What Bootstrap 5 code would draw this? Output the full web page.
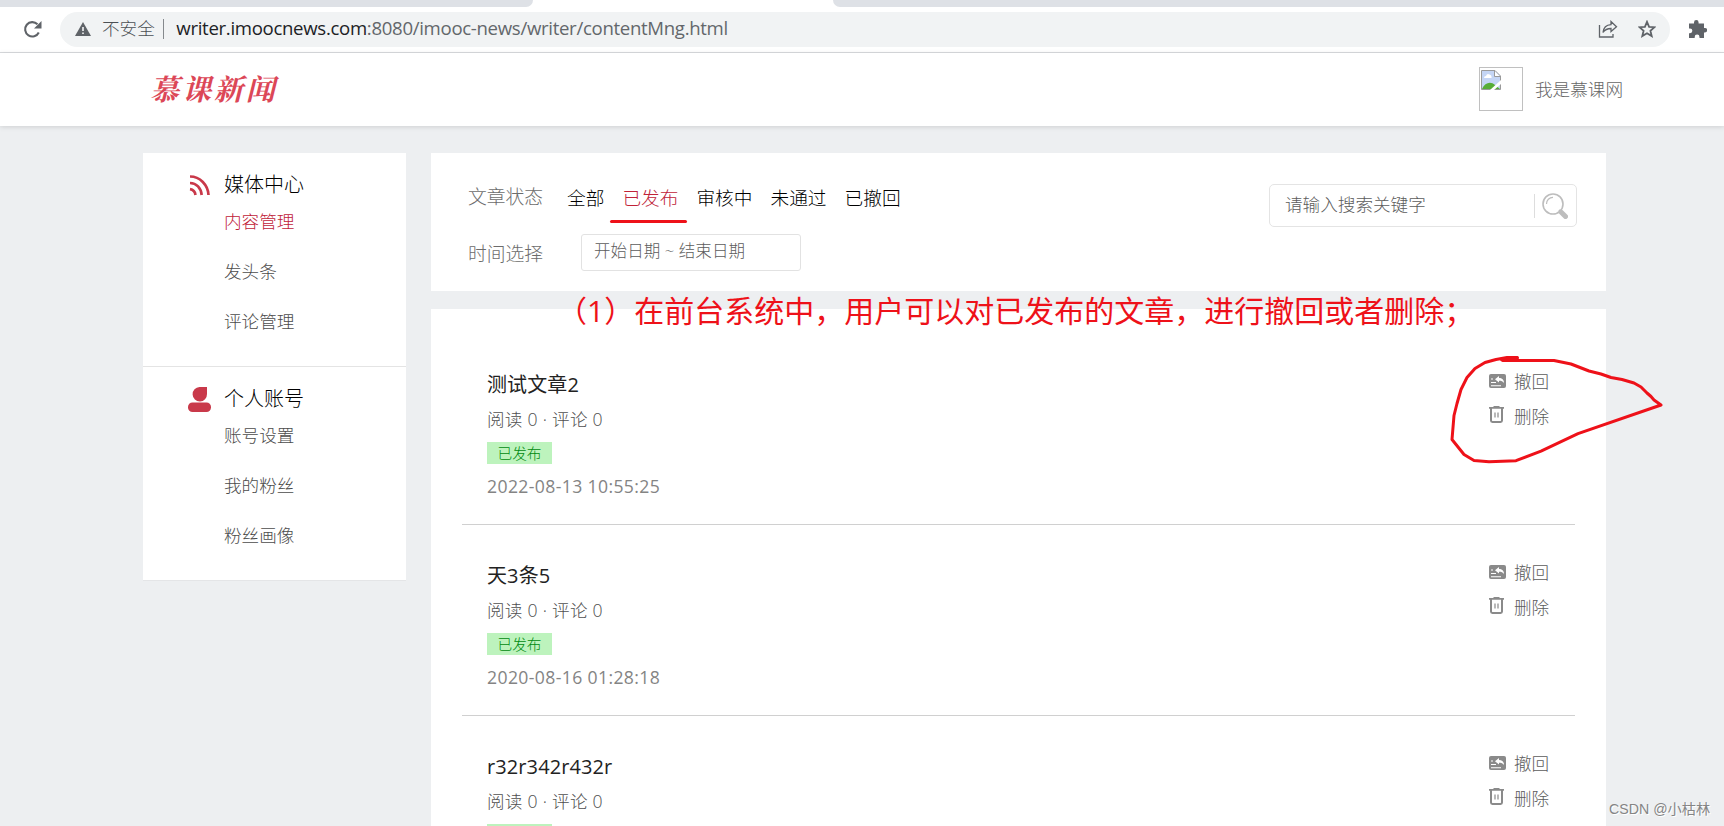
<!DOCTYPE html>
<html lang="zh-CN">
<head>
<meta charset="utf-8">
<title>内容管理</title>
<link rel="stylesheet" href="https://cdn.jsdelivr.net/npm/bootstrap@5.3.0/dist/css/bootstrap.min.css">
<style>
:root{--brand:#c9394a}
body{width:1724px;height:826px;overflow:hidden;position:relative;background:#edeff1;color:#222;font-family:"Open Sans","Noto Sans CJK SC",sans-serif;font-size:17.6px;line-height:26px;font-weight:300}
svg{display:block;flex:none}
.tabstrip{height:7px;background:#fff;display:flex;justify-content:space-between}
.tab-l{width:533px;background:#dee1e6;border-bottom-right-radius:7px}
.tab-r{width:891px;background:#dee1e6;border-bottom-left-radius:7px}
.toolbar{height:46px;background:#fff;border-bottom:1px solid #d9dbde;padding:4px 17px 5px 23px}
.omnibox{width:1610px;height:35px;margin-left:18px;border-radius:18px;background:#f1f3f4;padding:0 20px 0 15px;color:#4c5054}
.omnibox .divide{width:1.5px;height:20px;background:#85898d;margin:0 12px 0 8px}
.omnibox>span{margin-top:-2px}
.url{font-size:18.6px;letter-spacing:-.31px;color:#63676b;font-weight:400}
.url b{font-weight:400;color:#202124}
.topbar{height:73px;background:#fff;box-shadow:0 1px 5px rgba(0,0,0,.13);padding:0 101px 2px 151px;position:relative}
.logo{font-size:29px;letter-spacing:3px;font-weight:700;font-style:italic;color:#dc4757;font-family:"Noto Serif CJK SC","Noto Sans CJK SC",serif;line-height:36px;margin-top:-2px;margin-left:-1px}
.avatar{width:44px;height:44px;border:1px solid #c0c0c0;padding:2px 1px}
.page{padding:27px 118px 0 143px;gap:25px}
.side{width:263px;height:428px;background:#fff;border-bottom:1px solid #e4e5e7}
.side section{height:213px;padding-top:19px}
.side section+section{border-top:1px solid #e4e4e4}
.side h2{font-size:20px;line-height:26px;font-weight:300;margin:0;color:#000;height:26px}
.side h2 span{width:81px;padding-left:45px;display:block}
.side nav a{display:block;margin-left:81px;height:50px;line-height:50px;color:#4c4c4c;text-decoration:none}
.side nav{margin-top:-1px}
.side nav a.on,.states .on{color:#c02238}
.side nav a.on{height:49px;line-height:48px}
.side section+section nav{margin-top:-2px}
.main-col{width:1175px}
.filter{height:138px;background:#fff;position:relative;padding:31px 29px 0 37px}
.lab{font-size:18.8px;color:#6c6c6c;width:99px}
.states{font-size:18.7px;color:#000;gap:18px;padding-top:1px;height:26px}
.states span{position:relative}
.states .on::after{content:"";position:absolute;left:-12.5px;width:77px;top:34.5px;height:3px;border-radius:2px;background:#ee1119}
.date{width:220px;height:37px;border:1px solid #e2e2e2;border-radius:3px;font-size:16.5px;color:#5c5c5c;padding-left:12px;line-height:31px;letter-spacing:.1px}
.search{width:308px;height:43px;border:1px solid #e4e4e4;border-radius:5px;padding:0 8px 0 15px;color:#5c5c5c}
.search span{margin-top:-4px}
.search i{width:1px;height:24px;background:#ddd;margin-right:7px}
.list{margin-top:18px;background:#fff;height:517px;overflow:hidden;padding:25px 31px 0 31px}
.item{height:191px;border-bottom:1px solid #d0d0d0;padding:38px 25px 0 25px}
.item:last-child{border:0}
.item h3{font-size:20px;line-height:26px;margin:0;font-weight:400;color:#222;letter-spacing:.1px}
.meta{margin-top:8px;color:#505050;height:26px;letter-spacing:.27px}
.tag{display:block;width:65px;height:22px;line-height:22px;margin-top:10px;background:#bdf3bd;color:#008a10;font-size:14.7px;text-align:center}
.time{margin-top:9px;color:#848484;font-weight:400;letter-spacing:.38px}
.acts{color:#5c5c5c;width:61px;margin-top:-4px}
.acts div{height:26px;margin-bottom:9px;gap:8px}
.acts svg{width:17px}
.acts div:last-child svg{margin-top:-3px}
.note{position:absolute;left:557px;top:289px;font-size:30px;line-height:44px;color:#ee1119;white-space:nowrap;font-weight:400}
.ink{position:absolute;left:0;top:0;pointer-events:none}
.wm{position:absolute;left:1609px;top:798px;font:14.2px/22px "Liberation Sans","Noto Sans CJK SC",sans-serif;color:#858585;text-shadow:1px 1px 0 #fff;white-space:nowrap}
</style>
<script src="https://cdn.jsdelivr.net/npm/bootstrap@5.3.0/dist/js/bootstrap.bundle.min.js"></script>
</head>
<body>
<svg width="0" height="0" class="position-absolute"><defs>
<symbol id="recall" viewBox="0 0 17 14"><rect width="17" height="14" rx="2" fill="#8a8a8a"/><path d="M2 5h2M2 8.500h5M2 11.700h10" stroke="#fff" stroke-width="1.100"/><path d="M6 5.200L10 2v2c3 0 5 1.500 5 5-1.200-1.700-2.500-2.200-5-2.200v1.700z" fill="#fff"/></symbol>
<symbol id="trash" viewBox="0 0 15 17"><path d="M0 1.800h15M4.500.8h6" stroke="#8a8a8a" stroke-width="1.700"/><path d="M2 2v12.600q0 1.400 1.400 1.400h8.200q1.400 0 1.400-1.400V2" fill="none" stroke="#8a8a8a" stroke-width="2"/><path d="M6 6.500v5M9 6.500v5" stroke="#8a8a8a" stroke-width="1.200"/></symbol>
</defs></svg>
<div class="tabstrip"><div class="tab-l"></div><div class="tab-r"></div></div>
<div class="toolbar d-flex align-items-center">
<svg width="19" height="19" viewBox="0 0 19 19"><path d="M15.800 12.500A7.200 7.200 0 1 1 14.500 4.300" fill="none" stroke="#5f6368" stroke-width="2.100"/><path d="M18.500 1v7.500H11z" fill="#5f6368"/></svg>
<div class="omnibox d-flex align-items-center">
<svg width="16" height="14" viewBox="0 0 16 14"><path d="M8 0l8 14H0z" fill="#5f6368"/><path d="M8 5v4M8 10.500v1.600" stroke="#fff" stroke-width="1.500"/></svg>
<span style="margin-left:11px">不安全</span><span class="divide"></span>
<span class="url me-auto"><b>writer.imoocnews.com</b>:8080/imooc-news/writer/contentMng.html</span>
<svg width="20" height="18" viewBox="0 0 20 18" fill="none" stroke="#5f6368" stroke-width="1.300"><path d="M1.500 5v12h13.500v-3"/><path d="M5 12.500C5.500 8 8.500 5 13 4.700V1.500L18.500 6.800 13 11.500V8.500C9 8.500 7 9.500 5 12.500z"/></svg>
<svg width="18" height="18" viewBox="0 0 18 18" style="margin-left:20px;margin-right:-6px"><path d="M9 1.800l2.100 5 5.400.4-4.100 3.600 1.300 5.300L9 13.200l-4.700 2.900 1.300-5.300L1.500 7.200l5.400-.4z" fill="none" stroke="#5f6368" stroke-width="1.800"/></svg>
</div>
<svg class="ms-auto" width="18" height="18" viewBox="0 0 18 18"><path d="M0 3.500h5V2.400a2.300 2.300 0 0 1 4.600 0v1.100H15V8h1a2.200 2.200 0 0 1 0 4.400h-1V18h-4.500v-1a2.400 2.400 0 0 0-4.800 0v1H0v-4.800h1a2.300 2.300 0 0 0 0-4.700H0z" fill="#5f6368"/></svg>
</div>
<header class="topbar d-flex align-items-center justify-content-between">
<div class="logo">慕课新闻</div>
<div class="d-flex align-items-center" style="gap:12px;color:#666"><div class="avatar"><svg width="20" height="20" viewBox="0 0 20 20"><path d="M.5.500H14L19.500 6v13.500H.5z" fill="#c4d5f5" stroke="#9a9a9a"/><path d="M1 19c3-7 9-8 13-4l5 4z" fill="#56ad37"/><path d="M3 8q0-2 2-2 1-3 3.500-1.500Q11 5 10.500 8z" fill="#fff"/><path d="M13.500 1v5.500H19" fill="#fff" stroke="#999"/><path d="M20 10v4l-7 6H9z" fill="#fff"/></svg></div><span>我是慕课网</span></div>
</header>
<main class="page d-flex align-items-start">
<aside class="side">
<section><h2 class="d-flex align-items-center"><span><svg width="22" height="22" viewBox="0 0 22 22" fill="none" stroke="#c9394a" stroke-width="2.700"><path d="M2 2.500C12 2.500 20 11 20.500 21M2 9c6.500 0 11 5 11.700 12M2 15.200c3.500.5 5 2.300 5.500 5.800"/></svg></span>媒体中心</h2>
<nav><a href="#" class="on">内容管理</a><a href="#">发头条</a><a href="#">评论管理</a></nav></section>
<section><h2 class="d-flex align-items-center"><span><svg width="23" height="25" viewBox="0 0 23 25" fill="#c9394a"><path d="M11.500 0H19v7a7.200 7.200 0 1 1-7.500-7z"/><rect y="15.500" width="23" height="9.500" rx="4.500"/></svg></span>个人账号</h2>
<nav><a href="#">账号设置</a><a href="#">我的粉丝</a><a href="#">粉丝画像</a></nav></section>
</aside>
<div class="main-col">
<section class="filter d-flex justify-content-between align-items-start">
<div><div class="d-flex"><span class="lab">文章状态</span><div class="states d-flex"><span>全部</span><span class="on">已发布</span><span>审核中</span><span>未通过</span><span>已撤回</span></div></div>
<div class="d-flex" style="margin-top:24px"><span class="lab" style="width:113px;padding-top:7px">时间选择</span><div class="date">开始日期 ~ 结束日期</div></div></div>
<div class="search d-flex align-items-center"><span class="me-auto">请输入搜索关键字</span><i></i><svg width="26" height="26" viewBox="0 0 26 26" fill="none" stroke="#bdbdbd"><circle cx="11" cy="11" r="10" stroke-width="1.600"/><path d="M4.500 11A6.500 6.500 0 0 1 11 4.300" stroke-width="1.200"/><path d="M17 17l2 2" stroke-width="2"/><path d="M19.500 19.500l4 4" stroke-width="5" stroke-linecap="round"/></svg></div>
</section>
<section class="list">
<article class="item d-flex justify-content-between"><div><h3>测试文章2</h3><div class="meta">阅读 0 · 评论 0</div><span class="tag">已发布</span><div class="time">2022-08-13 10:55:25</div></div><div class="acts"><div class="d-flex align-items-center"><svg height="14"><use href="#recall"/></svg>撤回</div><div class="d-flex align-items-center"><svg height="17" viewBox="0 0 17 17"><use href="#trash" width="15" height="17"/></svg>删除</div></div></article>
<article class="item d-flex justify-content-between"><div><h3>天3条5</h3><div class="meta">阅读 0 · 评论 0</div><span class="tag">已发布</span><div class="time">2020-08-16 01:28:18</div></div><div class="acts"><div class="d-flex align-items-center"><svg height="14"><use href="#recall"/></svg>撤回</div><div class="d-flex align-items-center"><svg height="17" viewBox="0 0 17 17"><use href="#trash" width="15" height="17"/></svg>删除</div></div></article>
<article class="item d-flex justify-content-between"><div><h3>r32r342r432r</h3><div class="meta">阅读 0 · 评论 0</div><span class="tag"></span></div><div class="acts"><div class="d-flex align-items-center"><svg height="14"><use href="#recall"/></svg>撤回</div><div class="d-flex align-items-center"><svg height="17" viewBox="0 0 17 17"><use href="#trash" width="15" height="17"/></svg>删除</div></div></article>
</section>
</div>
</main>
<div class="note">（1）在前台系统中，用户可以对已发布的文章，进行撤回或者删除；</div>
<svg class="ink" width="1724" height="826" fill="none" stroke="#ee1119" stroke-width="3" stroke-linejoin="round" stroke-linecap="round"><path d="M1517 357.500h-10l-11 2-11 3-10 6-8 9-6 12-4 14-3 12-2 24 12 15 10 6 15 1.200 27-1 25-9.500 37-17.500L1661 405L1654 400 1651 396.500 1647 393 1641 387 1634 383 1622 379.500 1611 377.500 1601 374 1589 371 1571 364 1554 360.500H1503"/><path d="M1502 359.500l15-1.500" stroke-width="4"/></svg>
<div class="wm">CSDN @小枯林</div>
</body>
</html>
